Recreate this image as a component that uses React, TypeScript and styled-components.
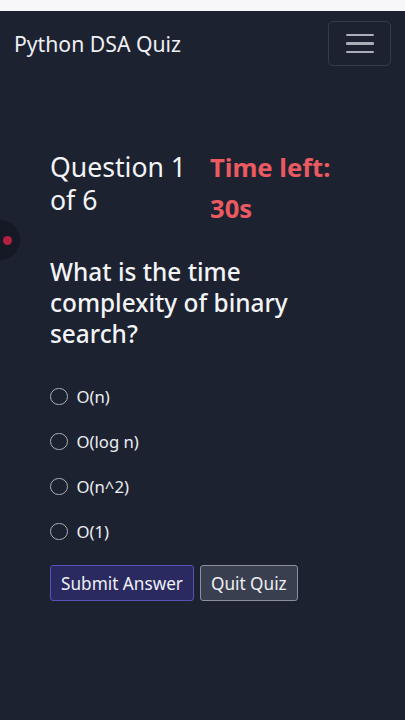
import React, { useState } from "react";
import styled, { createGlobalStyle } from "styled-components";

const GlobalStyle = createGlobalStyle`
  html, body {
    margin: 0;
    padding: 0;
    background: #1d2231;
  }
  body {
    font-family: "Noto Sans", "Open Sans", sans-serif;
    color: #f3f4f6;
  }
  * {
    box-sizing: border-box;
  }
`;

const options = ["O(n)", "O(log n)", "O(n^2)", "O(1)"];

export default function App() {
  const [picked, setPicked] = useState<string | null>(null);

  return (
    <>
      <GlobalStyle />
      <Page>
        <TopStrip />
        <Navbar>
          <Brand>Python DSA Quiz</Brand>
          <Toggler aria-label="menu">
            <Bar />
            <Bar />
            <Bar />
          </Toggler>
        </Navbar>
        <Main>
          <HeaderRow>
            <Counter>Question 1 of 6</Counter>
            <Timer>Time left: 30s</Timer>
          </HeaderRow>
          <QuestionText>What is the time complexity of binary search?</QuestionText>
          <OptionList>
            {options.map((opt) => (
              <OptionRow key={opt}>
                <Radio
                  type="radio"
                  name="answer"
                  checked={picked === opt}
                  onChange={() => setPicked(opt)}
                />
                <span>{opt}</span>
              </OptionRow>
            ))}
          </OptionList>
          <Actions>
            <Button variant="primary">Submit Answer</Button>
            <Button variant="secondary">Quit Quiz</Button>
          </Actions>
        </Main>
        <FloatingDot>
          <RedDot />
        </FloatingDot>
      </Page>
    </>
  );
}

const Page = styled.div`
  position: relative;
  min-height: 720px;
  background: #1d2231;
  overflow: hidden;
`;

const TopStrip = styled.div`
  height: 11px;
  background: #f7f7fa;
`;

const Navbar = styled.nav`
  display: flex;
  align-items: center;
  justify-content: space-between;
  padding: 9px 14px 0 14px;
  height: 56px;
`;

const Brand = styled.div`
  font-size: 21.2px;
  color: #eef0f4;
`;

const Toggler = styled.button`
  width: 63px;
  height: 45px;
  background: transparent;
  border: 1px solid #343a4a;
  border-radius: 5px;
  display: flex;
  flex-direction: column;
  align-items: center;
  justify-content: center;
  gap: 6px;
  padding: 0;
`;

const Bar = styled.span`
  display: block;
  width: 28px;
  height: 2.5px;
  border-radius: 1px;
  background: #a9aeb9;
`;

const Main = styled.main`
  padding: 84px 50px 0 50px;
`;

const HeaderRow = styled.div`
  display: flex;
  align-items: flex-start;
  gap: 22px;
`;

const Counter = styled.h2`
  margin: 0;
  width: 138px;
  font-size: 26.6px;
  font-weight: 400;
  line-height: 33px;
  color: #f3f4f6;
`;

const Timer = styled.div`
  width: 135px;
  font-size: 25.6px;
  font-weight: 700;
  line-height: 41px;
  margin-top: -4px;
  color: #ea5a60;
`;

const QuestionText = styled.h3`
  margin: 27px 0 0 0;
  font-size: 24.4px;
  font-weight: 500;
  line-height: 31px;
  color: #f3f4f6;
  max-width: 270px;
`;

const OptionList = styled.div`
  display: flex;
  flex-direction: column;
  gap: 24px;
  margin-top: 37px;
`;

const OptionRow = styled.label`
  display: flex;
  align-items: center;
  gap: 9px;
  height: 21px;
  font-size: 16.7px;
  color: #eceef2;
`;

const Radio = styled.input`
  appearance: none;
  margin: 0;
  width: 17.5px;
  height: 17.5px;
  border-radius: 50%;
  border: 1.5px solid #aab0bb;
  background: transparent;
  &:checked {
    background: radial-gradient(circle, #6366f1 40%, transparent 45%);
    border-color: #6366f1;
  }
`;

const Actions = styled.div`
  display: flex;
  gap: 6px;
  margin-top: 23px;
`;

const Button = styled.button<{ variant: "primary" | "secondary" }>`
  font-family: inherit;
  font-size: 17.2px;
  color: #eef0f4;
  height: 36px;
  padding: 0 10px;
  border-radius: 3px;
  background: ${({ variant }) => (variant === "primary" ? "#2b2a60" : "#3a3f50")};
  border: 1.5px solid ${({ variant }) => (variant === "primary" ? "#5654b8" : "#8c909c")};
`;

const FloatingDot = styled.div`
  position: absolute;
  left: -20px;
  top: 220px;
  width: 40px;
  height: 40px;
  border-radius: 50%;
  background: #141925;
  display: flex;
  align-items: center;
  justify-content: flex-end;
  padding-right: 8px;
`;

const RedDot = styled.span`
  width: 9px;
  height: 9px;
  border-radius: 50%;
  background: #b3213f;
`;
